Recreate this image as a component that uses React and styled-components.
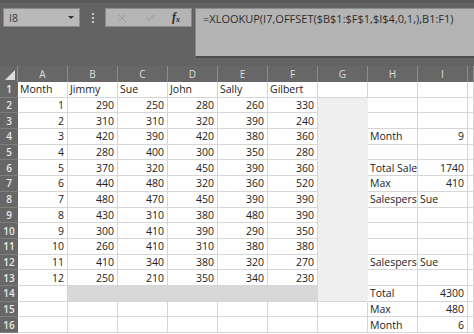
import styled, { createGlobalStyle } from "styled-components";
import { X, Check } from "lucide-react";

const GlobalStyle = createGlobalStyle`
  html, body { margin: 0; padding: 0; background: #ffffff; }
  body { font-family: "Open Sans", "Liberation Sans", sans-serif; }
`;

const COLS = ["A", "B", "C", "D", "E", "F", "G", "H", "I", ""];

const sales = [
  [290, 250, 280, 260, 330],
  [310, 310, 320, 390, 240],
  [420, 390, 420, 380, 360],
  [280, 400, 300, 350, 280],
  [370, 320, 450, 390, 360],
  [440, 480, 320, 360, 520],
  [480, 470, 450, 390, 390],
  [430, 310, 380, 480, 390],
  [300, 410, 390, 290, 350],
  [260, 410, 310, 380, 380],
  [410, 340, 380, 320, 270],
  [250, 210, 350, 340, 230],
];

// side table in H:I, keyed by row number
const side = {
  4: ["Month", 9],
  6: ["Total Sale", 1740],
  7: ["Max", 410],
  8: ["Salesperson", "Sue"],
  12: ["Salesperson", "Sue"],
  14: ["Total", 4300],
  15: ["Max", 480],
  16: ["Month", 6],
};

const buildRows = () => {
  const rows = [];
  rows.push(["Month", "Jimmy", "Sue", "John", "Sally", "Gilbert", "", "", "", ""]);
  sales.forEach((s, i) => rows.push([i + 1, ...s, "", "", "", ""]));
  for (let r = 14; r <= 16; r++) rows.push(["", "", "", "", "", "", "", "", "", ""]);
  Object.entries(side).forEach(([r, [h, v]]) => {
    rows[r - 1][7] = h;
    rows[r - 1][8] = v;
  });
  return rows;
};

const fillFor = (r, c) => {
  if (c === 6 && r >= 2 && r <= 14) return "light";
  if (r === 14 && c >= 1 && c <= 5) return "dark";
  return "none";
};

const App = () => {
  const rows = buildRows();
  return (
    <Page>
      <GlobalStyle />
      <Toolbar>
        <NameBox>
          <span>I8</span>
          <Caret />
        </NameBox>
        <Grip>
          <i />
          <i />
          <i />
        </Grip>
        <ActionBox>
          <X size={12} strokeWidth={1.4} color="#8f8f8f" />
          <Check size={13} strokeWidth={1.4} color="#8f8f8f" />
          <Fx>
            f<sub>x</sub>
          </Fx>
        </ActionBox>
        <FormulaBar>=XLOOKUP(I7,OFFSET($B$1:$F$1,$I$4,0,1,),B1:F1)</FormulaBar>
      </Toolbar>
      <Sheet>
        <Corner>
          <Triangle />
        </Corner>
        {COLS.map((c, i) => (
          <ColHead key={i}>{c}</ColHead>
        ))}
        {rows.map((row, ri) => [
          <RowHead key={`h${ri}`}>{ri + 1}</RowHead>,
          ...row.map((val, ci) => {
            const fill = fillFor(ri + 1, ci);
            return (
              <Cell
                key={`${ri}-${ci}`}
                $right={typeof val === "number"}
                $fill={fill}
                $noBottom={fill !== "none" && !(ri + 1 === 14)}
              >
                {val}
              </Cell>
            );
          }),
        ])}
      </Sheet>
    </Page>
  );
};

export default App;

const Page = styled.div`
  width: 474px;
  height: 334px;
  overflow: hidden;
  background: #ffffff;
`;

const Toolbar = styled.div`
  height: 66px;
  box-sizing: border-box;
  display: flex;
  align-items: flex-start;
  padding-top: 8px;
  padding-left: 3px;
  background: linear-gradient(#5a5a5a 0 3px, #636363 3px);
`;

const NameBox = styled.div`
  width: 77px;
  height: 19px;
  box-sizing: border-box;
  background: #b9b9b9;
  border: 1px solid #8a8a8a;
  display: flex;
  align-items: center;
  justify-content: space-between;
  padding: 0 5px 0 5px;
  font-size: 10.5px;
  color: #3a3a3a;
`;

const Caret = styled.span`
  width: 0;
  height: 0;
  border-left: 3px solid transparent;
  border-right: 3px solid transparent;
  border-top: 3px solid #333;
`;

const Grip = styled.div`
  width: 25px;
  height: 19px;
  display: flex;
  flex-direction: column;
  align-items: center;
  justify-content: center;
  gap: 2px;

  i {
    width: 2px;
    height: 2px;
    background: #c8c8c8;
  }
`;

const ActionBox = styled.div`
  width: 87px;
  height: 19px;
  box-sizing: border-box;
  background: #b5b5b5;
  border: 1px solid #8a8a8a;
  display: flex;
  align-items: center;
  justify-content: space-between;
  padding: 0 11px 0 10px;
`;

const Fx = styled.span`
  font-family: "Liberation Serif", serif;
  font-style: italic;
  font-weight: bold;
  font-size: 12px;
  color: #2a2a2a;

  sub {
    font-size: 8px;
    vertical-align: -1px;
  }
`;

const FormulaBar = styled.div`
  flex: 1;
  margin-left: 3px;
  height: 50px;
  box-sizing: border-box;
  background: #b4b4b4;
  border: 1px solid #8a8a8a;
  border-right: none;
  border-bottom: 2px solid #4c4c4c;
  padding: 2px 0 0 7px;
  font-size: 11px;
  color: #2e2e2e;
  white-space: nowrap;
  overflow: hidden;
`;

const Sheet = styled.div`
  display: grid;
  grid-template-columns: 18px repeat(9, 50px) 1fr;
  grid-template-rows: 16px;
  grid-auto-rows: 15.7px;
  font-size: 10.5px;
  color: #222;
`;

const Corner = styled.div`
  background: #676767;
  position: relative;
  border-right: 1px solid #8c8c8c;
`;

const Triangle = styled.div`
  position: absolute;
  right: 2px;
  bottom: 2px;
  width: 0;
  height: 0;
  border-left: 10px solid transparent;
  border-bottom: 10px solid #dcdcdc;
`;

const ColHead = styled.div`
  background: #676767;
  color: #dedede;
  display: flex;
  align-items: center;
  justify-content: center;
  box-sizing: border-box;
  border-right: 1px solid #8c8c8c;
  font-size: 10px;
`;

const RowHead = styled.div`
  background: #676767;
  color: #e8e8e8;
  display: flex;
  align-items: center;
  justify-content: center;
  box-sizing: border-box;
  border-bottom: 1px solid #7e7e7e;
  font-size: 10px;
  font-weight: 600;
`;

const fills = { none: "#ffffff", light: "#efefef", dark: "#d8d8d8" };

const Cell = styled.div`
  box-sizing: border-box;
  background: ${(p) => fills[p.$fill]};
  border-right: 1px solid ${(p) => (p.$fill === "none" ? "#d6d6d6" : fills[p.$fill])};
  border-bottom: 1px solid ${(p) => (p.$noBottom ? fills[p.$fill] : "#d6d6d6")};
  display: flex;
  align-items: center;
  justify-content: ${(p) => (p.$right ? "flex-end" : "flex-start")};
  padding: 0 3px 0 2px;
  white-space: nowrap;
  overflow: hidden;
`;
